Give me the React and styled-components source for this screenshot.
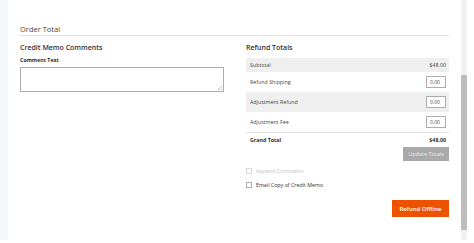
import React from "react";
import styled, { createGlobalStyle } from "styled-components";

const GlobalStyle = createGlobalStyle`
  html, body {
    margin: 0;
    padding: 0;
    background: #fff;
  }
  body {
    font-family: "Open Sans", "Liberation Sans", sans-serif;
    color: #303030;
  }
  * {
    box-sizing: border-box;
  }
`;

const Page = styled.div`
  display: flex;
  width: 474px;
  height: 243px;
  overflow: hidden;
`;

const SideStrip = styled.div`
  width: 8px;
  height: 240px;
  background: #f5f6fa;
  flex-shrink: 0;
`;

const Main = styled.main`
  width: 429px;
  margin-left: 12px;
  padding-top: 24px;
  flex-shrink: 0;
`;

const ScrollTrack = styled.div`
  width: 6px;
  height: 240px;
  margin-left: 12px;
  padding: 75px 0 10px;
  background: #f1f1f1;
  display: flex;
  flex-direction: column;
  flex-shrink: 0;
`;

const ScrollThumb = styled.div`
  flex: 1;
  background: #bdbdbd;
`;

const SectionTitle = styled.h2`
  margin: 0;
  font-size: 7.5px;
  line-height: 10px;
  font-weight: 400;
  color: #4a4542;
  padding-bottom: 1px;
  border-bottom: 1px solid #e3e3e3;
`;

const Columns = styled.div`
  display: grid;
  grid-template-columns: 204px 203px;
  column-gap: 22px;
  margin-top: 7px;
`;

const Column = styled.section`
  display: flex;
  flex-direction: column;
`;

const SubTitle = styled.h3`
  margin: 0;
  font-size: 7px;
  line-height: 9px;
  font-weight: 600;
  color: #303030;
`;

const FieldLabel = styled.label`
  margin-top: 5px;
  font-size: 5.3px;
  line-height: 7px;
  font-weight: 700;
  color: #303030;
`;

// small corner grip drawn with gradients instead of the native resizer
const CommentArea = styled.textarea`
  margin-top: 3px;
  width: 204px;
  height: 25px;
  border: 1px solid #adadad;
  border-radius: 0;
  resize: none;
  font-family: inherit;
  font-size: 6px;
  padding: 2px;
  outline: none;
  background: linear-gradient(
      135deg,
      transparent 0 48%,
      #bcbcbc 48% 62%,
      transparent 62% 76%,
      #bcbcbc 76% 90%,
      transparent 90%
    )
    no-repeat right 1px bottom 1px / 4px 4px,
    #fff;
`;

const TotalsTable = styled.div`
  margin-top: 6px;
  display: flex;
  flex-direction: column;
`;

const TotalsRow = styled.div`
  display: flex;
  align-items: center;
  justify-content: space-between;
  height: ${(p) => (p.$tall ? "20px" : "14px")};
  padding: 0 3px 0 4px;
  background: ${(p) => (p.$shaded ? "#efefef" : "transparent")};
  border-top: ${(p) => (p.$ruled ? "1px solid #e3e3e3" : "none")};
  font-size: 5.3px;
  font-weight: ${(p) => (p.$bold ? 700 : 400)};
  color: ${(p) => (p.$bold ? "#303030" : "#4a4542")};
`;

const AmountInput = styled.input`
  width: 20px;
  height: 12px;
  border: 1px solid #adadad;
  border-radius: 0;
  padding: 0 0 0 3px;
  font-family: inherit;
  font-size: 5px;
  color: #514943;
  outline: none;
`;

const ActionRight = styled.div`
  display: flex;
  justify-content: flex-end;
  margin-top: ${(p) => p.$gap || "0"};
`;

const UpdateButton = styled.button`
  width: 46px;
  height: 14px;
  border: none;
  padding: 0;
  background: #a9a9a9;
  color: #ececec;
  font-family: inherit;
  font-size: 5.5px;
  font-weight: 400;
  cursor: not-allowed;
`;

const CheckList = styled.div`
  display: flex;
  flex-direction: column;
  gap: 6px;
  margin-top: 6px;
`;

const CheckRow = styled.label`
  display: flex;
  align-items: center;
  gap: 4px;
  height: 8px;
  font-size: 5.3px;
  color: ${(p) => (p.$disabled ? "#c4c4c4" : "#303030")};
`;

const Box = styled.span`
  width: 6px;
  height: 6px;
  border: 1px solid ${(p) => (p.$disabled ? "#d9d9d9" : "#adadad")};
  background: #fff;
  flex-shrink: 0;
`;

const RefundButton = styled.button`
  width: 57px;
  height: 17px;
  border: none;
  padding: 0;
  background: #eb5202;
  color: #fff;
  font-family: inherit;
  font-size: 6px;
  font-weight: 600;
  cursor: pointer;
`;

const totals = [
  { label: "Refund Shipping", value: "0.00", shaded: false },
  { label: "Adjustment Refund", value: "0.00", shaded: true },
  { label: "Adjustment Fee", value: "0.00", shaded: false },
];

const App = () => {
  return (
    <>
      <GlobalStyle />
      <Page>
        <SideStrip />
        <Main>
          <SectionTitle>Order Total</SectionTitle>
          <Columns>
            <Column>
              <SubTitle>Credit Memo Comments</SubTitle>
              <FieldLabel htmlFor="comment">Comment Text</FieldLabel>
              <CommentArea id="comment" />
            </Column>

            <Column>
              <SubTitle>Refund Totals</SubTitle>
              <TotalsTable>
                <TotalsRow $shaded>
                  <span>Subtotal</span>
                  <span>$48.00</span>
                </TotalsRow>
                {totals.map((row) => (
                  <TotalsRow key={row.label} $tall $shaded={row.shaded}>
                    <span>{row.label}</span>
                    <AmountInput defaultValue={row.value} />
                  </TotalsRow>
                ))}
                <TotalsRow $ruled $bold>
                  <span>Grand Total</span>
                  <span>$48.00</span>
                </TotalsRow>
              </TotalsTable>

              <ActionRight $gap="1px">
                <UpdateButton disabled>Update Totals</UpdateButton>
              </ActionRight>

              <CheckList>
                <CheckRow $disabled>
                  <Box $disabled />
                  Append Comments
                </CheckRow>
                <CheckRow>
                  <Box />
                  Email Copy of Credit Memo
                </CheckRow>
              </CheckList>

              <ActionRight $gap="11px">
                <RefundButton>Refund Offline</RefundButton>
              </ActionRight>
            </Column>
          </Columns>
        </Main>
        <ScrollTrack>
          <ScrollThumb />
        </ScrollTrack>
      </Page>
    </>
  );
};

export default App;
